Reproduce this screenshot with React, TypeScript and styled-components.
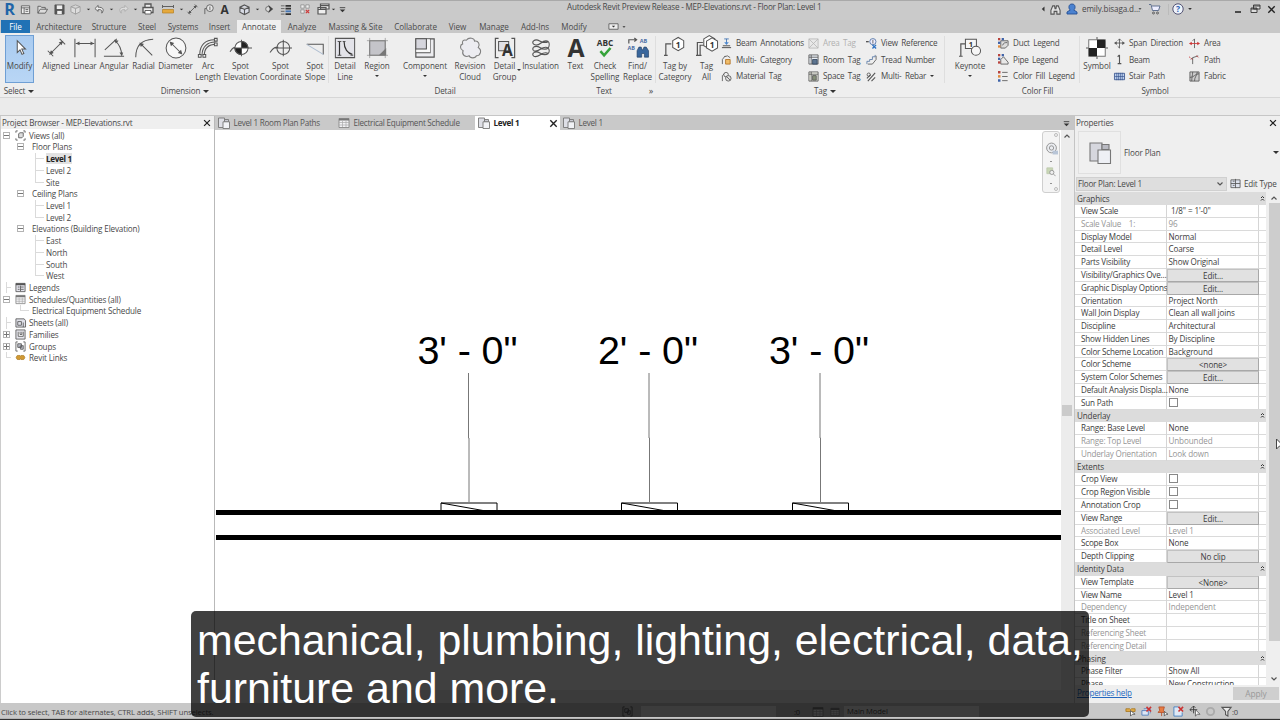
import React from "react";
import styled, { createGlobalStyle } from "styled-components";

const Global = createGlobalStyle`
  * { box-sizing: border-box; }
  html, body { margin: 0; padding: 0; }
  body {
    width: 1280px; height: 720px; overflow: hidden; background: #c9c9c9;
    font-family: "Open Sans", "Noto Sans", sans-serif;
    font-size: 8.1px; line-height: 12px; color: #484848; letter-spacing: -0.12px;
  }
`;

/* ---------- icons ---------- */
const K = "#555";
const tri = (x: number, y: number, s = 3, c = "#333") => <path d={`M${x - s} ${y - s / 2}h${2 * s}l${-s} ${s}z`} fill={c} stroke="none" />;
const hex = (x: number, y: number) => (
  <path d={`M${x - 6} ${y - 4}l6-3.5 6 3.5v7.5l-6 3.5-6-3.5z`} fill="#fff" stroke={K} />
);
const NumText = styled.text<{ $s?: number; $c?: string }>`
  font-family: "Open Sans", sans-serif; font-weight: 700; font-size: ${(p) => p.$s ?? 9}px;
  fill: ${(p) => p.$c ?? "#333"}; stroke: none; text-anchor: middle; letter-spacing: 0;
`;

const art: Record<string, React.ReactNode> = {
  modify: <path d="M9 4v13l3-3 2.2 5 2-1-2.2-4.8h4z" fill="#fff" stroke="#555" />,
  aligned: <g><path d="M6 18L19 5M3 15l6 6M16 2l6 6" /><path d="M4.5 19.5l2-5 3 3zM20 4l-2 5-3-3z" fill={K} stroke="none" /></g>,
  linear: <g><path d="M1 2v20M23 2v20M2 7h20" /><path d="M2 7l4-2v4zM22 7l-4-2v4z" fill={K} stroke="none" /></g>,
  angular: <g><path d="M1 21h22M2 14L15 2M13 4c5 4 7 9 7.5 16" /><path d="M12 3l5 1-3 3zM20.5 21l-2.500-4h4z" fill={K} stroke="none" /></g>,
  radial: <g><path d="M3 22C3 10 9 3 22 2.500M9 8l12 12" /><path d="M7 6l5 1.500-3.500 3.500z" fill={K} stroke="none" /></g>,
  diameter: <g><circle cx="12" cy="12" r="10.800" fill="#f7f7f7" /><path d="M6 6l12 12" /><path d="M5 5l5 1.500-3.500 3.500zM19 19l-5-1.500 3.500-3.500z" fill={K} stroke="none" /></g>,
  arc: <g><path d="M3 19C3 9 9 3 19 3M8 20c0-7 4-12 13-12M5.500 20C5.500 11 11 5.500 20 5.500" /><path d="M19 1.500h3v3h-3zM19 6.500h3v3h-3zM1.500 19h3v3h-3zM6.500 19h3v3h-3z" fill="#eee" /></g>,
  elevation: <g><path d="M0 16c4-6 6-5 9-5M12.500 3v18M3 12h21" /><circle cx="12.500" cy="12" r="7.200" fill="#fff" /><path d="M12.500 4.800a7.200 7.200 0 0 1 7.200 7.200h-7.200zM12.500 19.200a7.200 7.200 0 0 1-7.200-7.200h7.200z" fill="#222" /></g>,
  coordinate: <g><path d="M0 17c4-6 6-6 9-6M14.500 3v18M5 12h19" /><circle cx="14.500" cy="12" r="7" /></g>,
  slope: <g><path d="M3 8h18v11" /><path d="M3 8l18 11" stroke="#aebdd0" /></g>,
  detailLine: <g><path d="M1.500 1.500h21v21h-21z" fill="#e3e3e9" /><path d="M6 5v15M11 5c0 8 4 13 9 14" stroke="#333" strokeWidth="1.300" /><path d="M4 5h4M4 20h4M9.500 5h3M18 20h3" /></g>,
  region: <g><path d="M4 4h17v16H4z" fill="#c4c4c9" stroke="#777" /><path d="M1 4h23M1 20h23M4 1v22M21 1v22" stroke="#888" strokeWidth=".7" /><path d="M14 20l8-8v8z" fill="#777" stroke="none" /></g>,
  component: <g><path d="M2 2h20v20H2z" fill="#ededf0" strokeWidth="1.300" /><path d="M13.500 2v11H2M17.500 2v15H2" fill="none" strokeWidth="1.300" /><path d="M14 2.500h3.500v14H2.500V13H14z" fill="#f8f8f8" stroke="none" /><path d="M2 2h11.500v11H2z" fill="#d6d6dd" /></g>,
  cloud: <path d="M8 3.500c3-4 9-2 9 1 4-1 6.500 4 4 7 4.500 3 2.500 9-2 9-1 3-7 3-8 0-4 2-8.500-1-6.500-5.500C.5 13 1 8.500 4 7.500c-1-3 1-5 4-4z" fill="#ececf1" stroke="#808080" strokeWidth="1.200" />,
  group: <g><path d="M5 1.500H1.500v21H5M19 1.500h3.500v21H19" strokeWidth="1.300" /><path d="M5 5h11v10H5z" fill="#e1e1e6" /><NumText x="14.500" y="20.500" $s={17}>A</NumText></g>,
  insulation: <g><path d="M4 4c6-4 7 5 16 1M4 8c7 4 9-7 16-3M4 11c6-4 9 6 16 1M4 15c6 3 9-7 16-3M4 17c6-4 9 6 16 1M4 21c6 3 9-7 16-3" strokeWidth="1.300" /><path d="M4 4q-2 2 0 4M20 5q2 3 0 7M4 11q-2 2 0 4M20 12q2 3 0 6M4 17q-2 2 0 4" /></g>,
  bigA: <NumText x="12" y="22" $s={27}>A</NumText>,
  check: <g><NumText x="12" y="10" $s={9}>ABC</NumText><path d="M7 15.500l4 4.500 7-8" stroke="#35a33a" strokeWidth="2.800" /></g>,
  find: <g><NumText x="18" y="7" $s={6} $c="#4a6da5">AB</NumText><NumText x="4.500" y="14.500" $s={6} $c="#4a6da5">AB</NumText><path d="M2 7V3h8M8 1l2.500 2L8 5" strokeWidth="1.300" /><path d="M11 22v-7l2-4h2.500l1 3h1l1-3H21l2.500 4v7H19v-4h-3v4z" fill="#39669c" stroke="#223f63" strokeWidth=".7" /></g>,
  tagCat: <g><path d="M0 20h4M2 20V7.500h6" strokeWidth="1.300" />{hex(15.500, 8)}<NumText x="15.500" y="11.500">1</NumText></g>,
  tagAll: <g><path d="M0 20h6M1.500 20V6h6M4.500 20V9h5" strokeWidth="1.300" />{hex(14.500, 6)}{hex(17.500, 8.500)}<NumText x="17.500" y="12">1</NumText></g>,
  keynote: <g><path d="M0 21h4M2 21V7.500h5" strokeWidth="1.300" /><path d="M7 2.500h12v10H7z" fill="#f6f6f6" /><circle cx="18.500" cy="15" r="5" fill="#f6f6f6" /><NumText x="13" y="10.500" $s={8}>1</NumText></g>,
  symbol: <g><path d="M12 0v24M0 12h24" /><path d="M3 3h18v18H3z" fill="#fff" stroke="#777" /><path d="M12 3h8q1 0 1 1v8h-9zM12 21H4q-1 0-1-1v-8h9z" fill="#222" stroke="none" /></g>,
  planBig: <g strokeWidth="1.100" stroke="#777"><path d="M2 2h12v18H2z" fill="#d6d7de" /><path d="M14 3.500h7v5h-7z" fill="#b9bac2" /><path d="M10 9h12.500v13.500H10z" fill="#eef0f5" /></g>,

  beamAnn: <g><path d="M1 10.500h10M2 8.500h8" stroke="#333" /><path d="M3.500 1h5M6 1v5" stroke="#3a6fb0" /><path d="M3.500 4.500h5L6 7.500z" fill="#4a87d0" stroke="none" /></g>,
  multiCat: <g><path d="M1.500 11V6l3-4M4 3l3-1 3 2" /><path d="M5 6h5v5H5z" fill="#f0bd6a" stroke="#b06e1f" /></g>,
  material: <g><path d="M1.500 11V5l2-2" /><circle cx="5.500" cy="4" r="2.500" /><circle cx="8" cy="8" r="3" fill="#ddd" /><path d="M6 6l4 4" /></g>,
  areaTag: <g opacity=".35"><path d="M1 1h10v10H1zM1 1l10 10M11 1L1 11" fill="#ddd" /></g>,
  roomTag: <g><path d="M1 1h10v10H1z" fill="#e9eef5" /><path d="M1 3.500h10M3.500 1v10" /><path d="M5 6h5v5H5z" fill="#5d7590" stroke="#33475e" /></g>,
  spaceTag: <g><path d="M1 1h10v10H1z" fill="#eef0e6" /><path d="M1 3.500h10M3.500 1v10" /><path d="M5 5h4v5H5z" fill="#87927a" stroke={K} /></g>,
  viewRef: <g><path d="M0 4h3" strokeWidth="1.500" /><circle cx="7.500" cy="4" r="3.400" fill="#eef" stroke="#4b6ea0" /><path d="M7.500 2v4" /><path d="M7 7.500l4 4M11 7.500l-4 4" stroke="#2f73c4" strokeWidth="1.500" /></g>,
  tread: <g><path d="M1 11V8h3V6h3V3h3V1" stroke="#5577a5" /><path d="M2 11h5l4-5V2" /></g>,
  rebar: <g><path d="M2 11l8-9M1 8l4-4M6 11l4-4" strokeWidth="1.200" /><circle cx="3" cy="4" r="1.800" /></g>,
  duct: <g><path d="M3 3h8v5l-3 3H3z" fill="#ddd" /><path d="M0 0h2.500v2.500H0z" fill="#b8433d" stroke="none" /><path d="M4 0h2.500v2.500H4z" fill="#3d62a8" stroke="none" /><path d="M0 4h2.500v2.500H0z" fill="#3d62a8" stroke="none" /><path d="M0 8h2.500v2.500H0z" fill="#df8a3c" stroke="none" /><path d="M5 8c1-3 3-3 5-3" /></g>,
  pipe: <g><path d="M3 6l3-3 5 6v2H3z" fill="#e8e8e8" /><path d="M0 0h2.500v2.500H0z" fill="#b8433d" stroke="none" /><path d="M4 0h2.500v2.500H4z" fill="#3d62a8" stroke="none" /><path d="M0 4h2.500v2.500H0z" fill="#3d62a8" stroke="none" /><path d="M0 8h2.500v2.500H0z" fill="#b8433d" stroke="none" /></g>,
  fillLegend: <g><path d="M4.500 1.500h6M4.500 6h6M4.500 10.500h6" /><path d="M0 0h2.700v2.700H0z" fill="#b8433d" stroke="none" /><path d="M0 4.500h2.700v2.700H0z" fill="#df8a3c" stroke="none" /><path d="M0 9h2.700v2.700H0z" fill="#3d62a8" stroke="none" /></g>,
  span: <g><path d="M6 1v10M2 5.500h8M4 3L6 1l2 2M4 9l2 2" /><path d="M0 5.500l3-2v4zM12 5.500l-3-2v4z" fill={K} stroke="none" /></g>,
  beam: <path d="M6 1v9M4 3l2-2M4 10.500h4" strokeWidth="1.200" />,
  stair: <g><path d="M.5 2.500h11v7H.5z" fill="#bcd0ee" stroke="#34508a" /><path d="M3 2v8M5 2v8M7 2v8M9 2v8M1 6h10" stroke="#34508a" strokeWidth=".7" /></g>,
  area: <g><path d="M6 1v10M4 3L6 1" /><path d="M1 6h10" stroke="#c33" /><path d="M0 6l3-2v4zM12 6L9 4v4z" fill="#c33" stroke="none" /></g>,
  path: <g><path d="M4 11V4l6-2M2 6l2-2" /><path d="M0 3l4 3M8 2l3 2" stroke="#c33" strokeDasharray="2 1" /></g>,
  fabric: <g><path d="M1 1h10v10H1z" fill="#ccc" /><path d="M3 11c0-5 1-6 1-10M6 11c0-5 3-6 3-10M1 7c5 0 5-4 10-4" /></g>,

  revit: <NumText x="6" y="11.500" $s={15} $c="#1f65a8">R</NumText>,
  home: <g><path d="M1.500 2h9v8.500h-9z" fill="#eee" /><path d="M1.500 4.200h9M4.500 4v6.500" /><path d="M6 6h3M6 8h3" /></g>,
  open: <path d="M1 10V2.500h3l1 1.200h4v2M1 10l2.500-4.300h8L9 10z" fill="#dcdcdc" />,
  save: <g><path d="M1 1h10v10H1z" fill="#555" /><path d="M3 1.500h6v4H3z" fill="#eee" stroke="none" /><path d="M3.500 7.500h5V11h-5z" fill="#eee" stroke="none" /></g>,
  cubeGray: <path d="M6 1l5 2v5.500L6 11 1 8.500V3zM1 3l5 2 5-2M6 5v6" fill="#ddd" stroke="#999" />,
  undo: <path d="M4.500 1.500L1 5l3.500 3V6.200c3-.4 4.500.3 4 3.800 3-4 1.500-6.500-4-6.500z" fill="#eee" />,
  redo: <path d="M7.500 1.500L11 5 7.500 8V6.200c-3-.4-4.500.3-4 3.800-3-4-1.500-6.500 4-6.500z" fill="#ddd" stroke="#aaa" />,
  print: <g><path d="M3 4V1h6v3M1 4.500h10v5H1z" fill="#eee" strokeWidth="1.300" /><path d="M3 7.500h6v3.500H3z" fill="#fff" /></g>,
  measure: <g><path d="M.5 6.500h11V10H.5z" fill="#e5a93d" stroke="#b57f22" strokeWidth=".7" /><path d="M1 3.500h10M.5 2v3M11.500 2v3" /></g>,
  dim: <g><path d="M2 10l8-8M.5 8.500l3 3M8.500.5l3 3" /><path d="M1.500 10.500l1-3.500 2.500 2.500zM10.500 1.500l-1 3.500L7 2.500z" fill={K} stroke="none" /></g>,
  tagS: <g><path d="M2 11V5h3" /><circle cx="7.500" cy="4.500" r="3.700" fill="#e5e5e5" /><path d="M7.500 2.800v3.700" /></g>,
  aS: <NumText x="6" y="11" $s={13}>A</NumText>,
  cube: <path d="M6 1l5 2.500V9L6 11.500 1 9V3.500zM1 3.500L6 6l5-2.500M6 6v5" fill="#d9dce6" strokeWidth="1.200" />,
  section: <g><circle cx="5" cy="6" r="3" fill="#ddd" /><path d="M5 1l6 5-6 5 2-5z" fill="#444" stroke="none" /></g>,
  lines: <g><path d="M1 2h4M1 5h4M1 8h4M1 11h4" stroke="#555" /><path d="M6 2h6M6 5h6M6 11h6" strokeWidth="2" stroke="#333" /><path d="M6 8h6" strokeWidth="2" stroke="#4576b5" /></g>,
  closeWin: <g><path d="M1 1h4v4H1zM7 1h4v4H7zM1 7h4v4H1z" fill="#eee" stroke="#888" /><path d="M7 7l4 4M11 7l-4 4" stroke="#cc3a3a" strokeWidth="1.500" /></g>,
  switchWin: <path d="M3.500 1H12v5H3.500zM3.500 2.700H12M1 4.500h8V11H1zM1 6.500h8" fill="#eee" strokeWidth="1.200" />,
  binoc: <path d="M1 11V7l2-5h2l.5 3h1L7 2h2l2 5v4H7.500V8h-3v3z" fill="#e2e2e2" strokeWidth="1.200" />,
  user: <path d="M6 1c4 0 3.500 5 1.800 6L11 9v2H1V9l3.200-2C2.500 6 2 1 6 1z" fill="#4b82d0" stroke="#254f94" />,
  cart: <g><path d="M0 1.500h2l1.500 6h6l1.500-4.500H3" fill="#eef" stroke="#568" /><circle cx="4.500" cy="10" r="1" /><circle cx="8.500" cy="10" r="1" /></g>,
  help: <g><circle cx="6" cy="6" r="5.200" fill="#eef3fb" stroke="#446" /><NumText x="6" y="9" $s={8.5} $c="#2a5db0">?</NumText></g>,
  min: <path d="M3 9h6" strokeWidth="1.700" stroke="#333" />,
  restore: <path d="M4.500 2H11v4H4.500zM4.500 3H11M2 5h6v4.500H2zM2 6h6" stroke="#333" fill="#ddd" />,
  close: <path d="M2.500 2.500l7 7M9.500 2.500l-7 7" strokeWidth="1.500" stroke="#222" />,
  left: <path d="M7.500 3.500v5L4.800 6z" fill="#333" stroke="none" />,
  dot: tri(6, 6, 1.9),
  dd: <g><path d="M3 4h6" stroke="#333" />{tri(6, 7.500, 3)}</g>,
  pill: <g><path d="M1 3h10v6H1z" fill="#eee" strokeLinejoin="round" />{tri(6, 6.200, 1.800)}</g>,

  views: <g><path d="M1 3V1h2M9 1h2v2M11 9v2H9M3 11H1V9" /><path d="M4 4l1.500-1H9v4L7.500 8.500H4z" fill="#ddd" /></g>,
  legend: <g><path d="M1 1.500h10v9H1z" fill="#e4e4ec" /><path d="M1 2.500h10" strokeWidth="2" /><path d="M3 5.500h2M3 8h2M6.500 5.500h3M6.500 8h3M6 4v6" /></g>,
  table: <g><path d="M1 1.500h10v9H1z" fill="#f2f2f4" stroke="#888" /><path d="M1 2.500h10" strokeWidth="2" stroke="#777" /><path d="M1 5.500h10M1 8h10M4.500 4v6M8 4v6" stroke="#aaa" strokeWidth=".7" /></g>,
  sheet: <path d="M1 2h9l1.500 2v7H1zM3 5h4v4H3zM9 6v5" fill="#dfe0e8" />,
  family: <path d="M1 1h10v10H1zM3.500 3v5H9V3M5.500 3v3h2V3" fill="#e5e5ec" />,
  groups: <g><path d="M3 1H1v10h2M9 1h2v10H9" /><path d="M3 3h4v4H3zM5.500 5.500L9 5v4H6z" fill="#b9bcc8" /></g>,
  link: <path d="M2.500 3.800h3l.5 1 .5-1h3Q12 6 9.500 8.200h-3l-.5-1-.5 1h-3Q0 6 2.500 3.800z" fill="#d19a34" stroke="#a87720" strokeWidth=".7" />,
  plan: <g stroke="#777"><path d="M.5 1h6v9.500h-6z" fill="#dedfe6" /><path d="M6.500 2.500h4V5h-4z" fill="#c8c9d2" /><path d="M5 4.800h6.500v6.700H5z" fill="#f1f2f6" /></g>,
  editType: <path d="M1 2h10v8.500H1zM6 1v10M1 6h10M3 3.500h2M3 8h2" fill="#dde2ee" />,
  wheel: <g opacity=".6"><circle cx="6" cy="5.500" r="4.500" fill="#e4e8ef" /><circle cx="6" cy="5.500" r="2" /><path d="M7 8h5v3.500H7z" fill="#91a6c4" stroke="none" /></g>,
  zoom: <g opacity=".7"><path d="M1 1h7v7H1z" fill="#b7cc9c" stroke="#a3b58c" /><circle cx="7" cy="6.500" r="2.500" fill="#eee" /><path d="M9 8.500l2.500 2.500" /></g>,
  stA: <g><path d="M1 3h4l1 1 1-1h4v3H1z" fill="#e0aa47" stroke="#a77822" /><path d="M6 5v6l2-2h3z" fill="#fff" /></g>,
  stB: <g><path d="M1 5h7v5H1zM3 3h7v5" stroke="#4a78b8" fill="#dde6f4" /><path d="M6 1l5 5M11 1L6 6" stroke="#c33" strokeWidth="1.700" /></g>,
  stC: <g><path d="M2 1h6l-1 4 2 2H1l2-2zM5 7v4" fill="#e77c42" stroke="#b54d27" /><path d="M8 6v5l2-2h2z" fill="#fff" /></g>,
  stD: <g><path d="M6 1H1v10h9V7" stroke="#3c7bc0" fill="#dfe8f4" /><path d="M6 1l5 5M11 1L6 6" stroke="#c33" strokeWidth="1.700" /></g>,
  stE: <g><path d="M5 0v8M1 4h8M3 2l2-2 2 2M3 2L1 4l2 2" stroke="#333" /><path d="M7 4v7l2-2h3z" fill="#fff" /></g>,
  ring: <circle cx="6" cy="6" r="4" stroke="#aaa" strokeWidth="2" />,
  filter: <path d="M1 1.500h10L7.500 6v5L5 9.500V6z" fill="#ececec" strokeWidth="1.200" />,
};

const Svg = styled.svg`display: block; flex: none; overflow: visible;`;
const Icon = ({ n, s = 12 }: { n: string; s?: number }) => {
  const big = s >= 20;
  return (
    <Svg width={s} height={s} viewBox={big ? "0 0 24 24" : "0 0 12 12"} fill="none" stroke={K} strokeWidth={big ? 1.1 : 0.9}>
      {art[n]}
    </Svg>
  );
};

/* ---------- title bar and tabs ---------- */
const Window = styled.div`
  position: relative; width: 1280px; height: 720px; display: flex; flex-direction: column; overflow: hidden;
  background: #ebebeb; border-top: 1px solid #a9a9a9; white-space: nowrap;
`;
const TitleBar = styled.header`display: grid; grid-template-columns: 1fr 300px 1fr; height: 19px; background: #cacaca; flex: none;`;
const Quick = styled.div`display: flex; align-items: center; height: 16px; padding-left: 1px;`;
const Cell = styled.span<{ $w: number }>`
  width: ${(p) => p.$w}px; flex: none; display: flex; align-items: center; justify-content: center;
`;
const Title = styled.div`height: 13px; padding-left: 77px; width: 490px; line-height: 12px; letter-spacing: -0.22px;`;
const Account = styled.div`display: flex; align-items: center; justify-content: flex-end; height: 16px;`;
const UserName = styled.span`width: 56px;`;
const Rule = styled.i`width: 1px; height: 11px; background: #bbb;`;

const MenuRow = styled.nav`display: flex; height: 13px; background: #c8c8c8; padding-left: 1px; flex: none;`;
const MenuTab = styled.span<{ $w: number; $kind?: "file" | "on" }>`
  width: ${(p) => p.$w}px; text-align: center; line-height: 13px; display: flex; justify-content: center; align-items: center;
  background: ${(p) => (p.$kind === "file" ? "#2072b5" : p.$kind === "on" ? "#efefef" : "transparent")};
  color: ${(p) => (p.$kind === "file" ? "#fff" : "#4a4a4a")};
  letter-spacing: -0.08px;
`;

/* ---------- ribbon ---------- */
const Ribbon = styled.section`
  display: flex; height: 65px; background: #eee; border-bottom: 1px solid #d6d6d6; flex: none;
`;
const Group = styled.div<{ $w: number; $line?: boolean }>`
  position: relative; width: ${(p) => p.$w}px; flex: none; display: flex; flex-direction: column;
  &::after {
    content: ""; position: absolute; right: 0; top: 3px; width: 1px; height: 47px;
    background: ${(p) => (p.$line ? "#dedede" : "transparent")};
  }
`;
const Tools = styled.div<{ $l?: number }>`display: flex; height: 52px; padding: 2px 0 0 ${(p) => p.$l ?? 0}px;`;
const GroupName = styled.div<{ $l?: number; $r?: number }>`
  display: flex; justify-content: center; align-items: center; gap: 3px; height: 12px; line-height: 12px;
  padding-left: ${(p) => p.$l ?? 0}px; padding-right: ${(p) => p.$r ?? 0}px;
`;
const Big = styled.div<{ $w: number; $on?: boolean }>`
  width: ${(p) => p.$w}px; height: 48px; flex: none; display: flex; flex-direction: column; align-items: center;
  background: ${(p) => (p.$on ? "linear-gradient(#a9cbf0, #b9d6f5)" : "transparent")};
  outline: ${(p) => (p.$on ? "1px solid #6f9fd4" : "none")};
  outline-offset: -1px; line-height: 10.6px; text-align: center; letter-spacing: -0.07px;
  svg { margin: 2px 0 2px; }
`;
const Caret = styled.i<{ $s?: number }>`
  border: ${(p) => p.$s ?? 3}px solid transparent; border-top-color: #333; border-bottom: 0; flex: none;
  align-self: center;
`;
const Under = styled(Caret)`margin-top: 3px; border-width: 2px; border-bottom: 0;`;
const Drop = styled(Caret)`align-self: flex-start; margin: 34px 4px 0 -8px;`;
const Small = styled.div<{ $w: number }>`width: ${(p) => p.$w}px; flex: none; display: flex; flex-direction: column;`;
const SmallRow = styled.div<{ $off?: boolean }>`
  display: flex; align-items: center; gap: 4px; height: 16.5px; word-spacing: 1.6px; letter-spacing: -0.22px;
  color: ${(p) => (p.$off ? "#b0b0b0" : "#484848")};
`;
const Launcher = styled.span`position: absolute; right: 3px; bottom: 0; font-size: 9px;`;
const OptionsBar = styled.div`height: 18px; background: #ebebeb; border-bottom: 1px solid #c6c6c6; flex: none;`;

const BigTool = ({ i, w, t, u, on }: { i: string; w: number; t: string[]; u?: boolean; on?: boolean }) => (
  <Big $w={w} $on={on}>
    <Icon n={i} s={22} />
    {t.map((x) => <span key={x}>{x}</span>)}
    {u && <Under />}
  </Big>
);
const SmallTools = ({ w, rows }: { w: number; rows: [string, string][] }) => (
  <Small $w={w}>
    {rows.map(([i, t]) => (
      <SmallRow key={t} $off={t === "Area Tag"}>
        <Icon n={i} s={11} />{t}{t === "Multi- Rebar" && <Caret $s={2} />}
      </SmallRow>
    ))}
  </Small>
);

/* ---------- body ---------- */
const Body = styled.main`display: flex; flex: 1; min-height: 0;`;
const Browser = styled.aside`width: 215px; flex: none; background: #fff; border-right: 1px solid #b9b9b9; border-left: 1px solid #ccc;`;
const PaneTitle = styled.div`
  height: 13px; background: #efefef; display: flex; align-items: center; justify-content: space-between; padding: 0 2px 0 1px;
  letter-spacing: -0.17px; margin-bottom: 0.3px;
`;
const TreeRow = styled.div<{ $d: number }>`
  height: 11.72px; display: flex; align-items: center; padding-left: ${(p) => (p.$d === 3 ? 34 : p.$d === 2 ? 16 : 2)}px;
`;
const Elbow = styled.i<{ $end?: boolean; $w: number }>`
  width: ${(p) => p.$w}px; height: 11.72px; flex: none;
  background:
    linear-gradient(#dadada, #dadada) 0 0 / 1px ${(p) => (p.$end ? "50%" : "100%")} no-repeat,
    linear-gradient(#dadada, #dadada) 0 50% / 100% 1px no-repeat;
`;
const Toggle = styled.i<{ $plus?: boolean }>`
  width: 7px; height: 7px; flex: none; border: 1px solid #b3b3b3;
  background:
    linear-gradient(#777, #777) center / 5px 1px no-repeat,
    linear-gradient(#777, #777) center / 1px ${(p) => (p.$plus ? 5 : 0)}px no-repeat, #fff;
`;
const TreeName = styled.span<{ $on?: boolean; $ml: number }>`
  margin-left: ${(p) => p.$ml}px; line-height: 11px; letter-spacing: -0.15px;
  ${(p) => p.$on && "font-weight: 700; background: #e2e2e2; color: #222; letter-spacing: -0.3px;"}
`;

const Center = styled.section`width: 859px; flex: none; display: flex; flex-direction: column; background: #ececec;`;
const DocTabs = styled.div`display: flex; height: 14px; background: #c6c6c6; flex: none;`;
const DocTab = styled.div<{ $w: number; $on?: boolean }>`
  width: ${(p) => p.$w}px; display: flex; align-items: center; padding: 0 1px 0 3px; gap: 3.5px;
  background: ${(p) => (p.$on ? "#fff" : "#c9c9c9")}; color: ${(p) => (p.$on ? "#222" : "#555")};
  font-weight: ${(p) => (p.$on ? 700 : 400)};
  letter-spacing: ${(p) => (p.$on ? -0.3 : -0.25)}px;
  svg:last-child:not(:first-child) { margin-left: auto; }
`;
const TabMenu = styled.span`margin-left: auto; width: 15px; display: flex; align-items: center; justify-content: center;`;
const View = styled.div`flex: 1; display: flex; min-height: 0;`;
const Drawing = styled.div`width: 846px; background: #fff; position: relative; margin-bottom: 13px;`;
const Dim = styled.text`font-family: "Liberation Sans", Arial, sans-serif; font-size: 39.5px; letter-spacing: -0.1px; fill: #000;`;
const NavBar = styled.div`
  position: absolute; right: 1px; top: 1px; width: 18px; height: 62px; border: 1px solid #cfcfcf; border-radius: 3px;
  background: #f4f4f4; display: flex; flex-direction: column; align-items: center; justify-content: space-between; padding: 10px 0 8px;
`;
const Knob = styled.i<{ $b?: boolean }>`
  position: absolute; right: 1px; ${(p) => (p.$b ? "bottom: 1px" : "top: 1px")}; width: 4px; height: 4px; border-radius: 50%; border: 1px solid #bbb;
`;
const VScroll = styled.div`width: 11px; display: flex; flex-direction: column; align-items: center; padding-top: 4px;`;
const Thumb = styled.i`width: 10px; height: 11px; background: #cbcbcb; margin-top: 267px;`;

/* ---------- properties ---------- */
const Props = styled.aside`width: 206px; flex: none; background: #efefef; border-left: 1px solid #c4c4c4; display: flex; flex-direction: column;`;
const TypeRow = styled.div`height: 47px; display: flex; align-items: center; padding: 0 1px 0 3px; gap: 3px;`;
const Preview = styled.div`width: 43px; height: 43px; border: 1px solid #e0e0e0; background: #f0f0f0; display: grid; place-items: center;`;
const Grow = styled.span`flex: 1;`;
const Selector = styled.div`height: 15px; display: flex; gap: 3px; align-items: center; padding-left: 1px; margin-bottom: 1px; letter-spacing: -0.22px;`;
const Combo = styled.div`width: 151px; height: 14px; background: #dedede; border: 1px solid #d0d0d0; display: flex; align-items: center; justify-content: space-between; padding: 0 3px 0 1px;`;
const Grid = styled.div`display: flex; height: 493px; overflow: hidden; flex: none;`;
const Table = styled.div`width: 191px; background: #fff; overflow: hidden;`;
const Head = styled.div`
  height: 12.79px; background: #dcdcdc; display: flex; align-items: center; justify-content: space-between; padding: 0 1px 0 2px; color: #3c3c3c;
`;
const PRow = styled.div<{ $off?: boolean }>`
  height: 12.79px; display: grid; grid-template-columns: 92px 92px 7px; border-bottom: 1px solid #dadada;
  color: ${(p) => (p.$off ? "#969696" : "#3c3c3c")}; line-height: 12.6px;
`;
const PName = styled.span`padding-left: 6px; border-right: 1px solid #d5d5d5; white-space: pre; letter-spacing: -0.2px;`;
const PValue = styled.span<{ $in?: boolean }>`padding-left: ${(p) => (p.$in ? 4 : 1.5)}px; border-right: 1px solid #d5d5d5;`;
const PButton = styled.span`
  background: #e1e1e1; border: 1px solid #c2c2c2; border-right-color: #a8a8a8; border-bottom-color: #a8a8a8; text-align: center; line-height: 11px;
`;
const Box = styled.i`display: block; width: 9px; height: 9px; border: 1px solid #888; background: #fff; margin-top: 1px;`;
const PScroll = styled.div`flex: 1; display: flex; flex-direction: column; align-items: center; padding: 4px 0 4px 2px;`;
const PThumb = styled.i`width: 11px; height: 438px; background: #cdcdcd; margin: 3px 0 auto;`;
const Foot = styled.div`flex: 1; display: flex; justify-content: space-between; align-items: center; padding: 0 1px 2px 2px;`;
const Help = styled.span`color: #2468c0; text-decoration: underline; letter-spacing: -0.2px;`;
const Apply = styled.span`width: 46px; height: 13px; line-height: 13px; text-align: center; background: #cfcfcf; color: #999; font-size: 8.4px;`;

const Status = styled.footer`
  height: 15px; flex: none; background: #c8c8c8; display: flex; align-items: center; padding: 2px 0 0 1px; font-size: 7.6px;
`;
const StatusText = styled.span`width: 621px; letter-spacing: -0.12px; font-size: 7.7px;`;
const Field = styled.span<{ $w: number }>`width: ${(p) => p.$w}px; height: 11px; background: #eee; line-height: 11px; padding-left: 3px; margin-right: 18px;`;
const StatusIcons = styled.div`display: flex; gap: 5px; align-items: center; margin-left: auto; padding-right: 42px;`;
const Count = styled.span`margin-left: -5px;`;
const Edge = styled.div`height: 2px; flex: none; background: #303030; border-top: 1px solid #b4b4b4;`;

const Caption = styled.div`
  position: absolute; left: 191px; top: 610px; width: 898px; height: 106px; border-radius: 5px; background: rgba(0, 0, 0, 0.75);
  color: #fff; font: 42.85px/48px "Liberation Sans", Arial, sans-serif; letter-spacing: 0; padding: 5px 0 0 6px;
`;
const Pointer = styled.svg`position: absolute; left: 1275px; top: 437px;`;

type Node = { d: 1 | 2 | 3; t: string; i?: string; g?: "-" | "+"; end?: boolean; on?: boolean };
const tree: Node[] = [
  { d: 1, t: "Views (all)", i: "views", g: "-" },
  { d: 2, t: "Floor Plans", g: "-" },
  { d: 3, t: "Level 1", on: true }, { d: 3, t: "Level 2" }, { d: 3, t: "Site", end: true },
  { d: 2, t: "Ceiling Plans", g: "-" },
  { d: 3, t: "Level 1" }, { d: 3, t: "Level 2", end: true },
  { d: 2, t: "Elevations (Building Elevation)", g: "-" },
  { d: 3, t: "East" }, { d: 3, t: "North" }, { d: 3, t: "South" }, { d: 3, t: "West", end: true },
  { d: 1, t: "Legends", i: "legend" },
  { d: 1, t: "Schedules/Quantities (all)", i: "table", g: "-" },
  { d: 2, t: "Electrical Equipment Schedule", end: true },
  { d: 1, t: "Sheets (all)", i: "sheet" },
  { d: 1, t: "Families", i: "family", g: "+" },
  { d: 1, t: "Groups", i: "groups", g: "+" },
  { d: 1, t: "Revit Links", i: "link", end: true },
];

const TreeItem = ({ n }: { n: Node }) => (
  <TreeRow $d={n.d}>
    {n.d === 1 && (n.g ? <><Toggle $plus={n.g === "+"} /><Cell $w={1} /></> : <><Cell $w={3} /><Elbow $w={5} $end={n.end} /></>)}
    {n.d === 2 && (n.g ? <><Toggle /><Cell $w={1} /></> : <><Cell $w={3} /><Elbow $w={9} $end /></>)}
    {n.d === 3 && <Elbow $w={9} $end={n.end} />}
    {n.i && <Cell $w={18}><Icon n={n.i} s={11} /></Cell>}
    <TreeName $on={n.on} $ml={n.d === 2 ? (n.g ? 7 : 3) : n.d === 3 ? 2 : 0}>{n.t}</TreeName>
  </TreeRow>
);

type Prop = [string, string?, ("b" | "o" | "c" | "h" | "in")?];
const props: Prop[] = [
  ["Graphics", "", "h"], ["View Scale", "1/8\" = 1'-0\"", "in"], ["Scale Value    1:", "96", "o"], ["Display Model", "Normal"],
  ["Detail Level", "Coarse"], ["Parts Visibility", "Show Original"], ["Visibility/Graphics Ove...", "Edit...", "b"],
  ["Graphic Display Options", "Edit...", "b"], ["Orientation", "Project North"], ["Wall Join Display", "Clean all wall joins"],
  ["Discipline", "Architectural"], ["Show Hidden Lines", "By Discipline"], ["Color Scheme Location", "Background"],
  ["Color Scheme", "<none>", "b"], ["System Color Schemes", "Edit...", "b"], ["Default Analysis Displa...", "None"], ["Sun Path", "", "c"],
  ["Underlay", "", "h"], ["Range: Base Level", "None"], ["Range: Top Level", "Unbounded", "o"], ["Underlay Orientation", "Look down", "o"],
  ["Extents", "", "h"], ["Crop View", "", "c"], ["Crop Region Visible", "", "c"], ["Annotation Crop", "", "c"], ["View Range", "Edit...", "b"],
  ["Associated Level", "Level 1", "o"], ["Scope Box", "None"], ["Depth Clipping", "No clip", "b"],
  ["Identity Data", "", "h"], ["View Template", "<None>", "b"], ["View Name", "Level 1"], ["Dependency", "Independent", "o"],
  ["Title on Sheet", ""], ["Referencing Sheet", "", "o"], ["Referencing Detail", "", "o"],
  ["Phasing", "", "h"], ["Phase Filter", "Show All"], ["Phase", "New Construction"],
];
const Chevrons = () => (
  <Svg width="5" height="8" fill="none" stroke="#333" strokeWidth="1"><path d="M1 3l1.500-1.500L4 3M1 5.500L2.500 4 4 5.500" /></Svg>
);
const Angle = ({ down }: { down?: boolean }) => (
  <Svg width="6" height="4" fill="none" stroke="#555" strokeWidth="1.200"><path d={down ? "M.5.5l2.500 2.500L5.500.5" : "M.5 3.500L3 1l2.500 2.500"} /></Svg>
);
const PropRow = ({ p: [name, val, k] }: { p: Prop }) =>
  k === "h" ? (
    <Head><span>{name}</span><Chevrons /></Head>
  ) : (
    <PRow $off={k === "o"}>
      <PName>{name}</PName>
      {k === "b" ? <PButton>{val}</PButton> : <PValue $in={k === "in"}>{k === "c" ? <Box /> : val}</PValue>}
    </PRow>
  );

const quick: [string, number, number?][] = [
  ["revit", 16, 13], ["home", 16], ["open", 19], ["save", 15], ["cubeGray", 17], ["dot", 8], ["undo", 15], ["dot", 8], ["redo", 16], ["dot", 8],
  ["print", 17, 12], ["measure", 23, 12], ["dot", 4], ["dim", 19], ["tagS", 12], ["aS", 20], ["cube", 21], ["dot", 4], ["section", 19, 10], ["lines", 14, 11],
  ["closeWin", 25, 10], ["switchWin", 11, 12], ["dot", 11], ["dd", 7, 11],
];
const menus: [string, number][] = [
  ["Architecture", 58], ["Structure", 42], ["Steel", 34], ["Systems", 38], ["Insert", 35], ["Annotate", 44], ["Analyze", 42],
  ["Massing & Site", 65], ["Collaborate", 55], ["View", 29], ["Manage", 44], ["Add-Ins", 38], ["Modify", 40],
];
const dims: [number, string][] = [[253.5, "3' - 0\""], [434, "2' - 0\""], [605, "3' - 0\""]];

export default function App() {
  return (
    <Window>
      <Global />
      <TitleBar>
        <Quick>{quick.map(([n, w, s], i) => <Cell key={i} $w={w}><Icon n={n} s={s ?? 11} /></Cell>)}</Quick>
        <Title>Autodesk Revit Preview Release - MEP-Elevations.rvt - Floor Plan: Level 1</Title>
        <Account>
          <Cell $w={12}><Icon n="left" /></Cell><Cell $w={12}><Icon n="binoc" s={11} /></Cell><Cell $w={21}><Icon n="user" /></Cell>
          <UserName>emily.bisaga.d...</UserName>
          <Cell $w={4}><Icon n="dot" s={10} /></Cell><Cell $w={26}><Icon n="cart" /></Cell><Rule />
          <Cell $w={17}><Icon n="help" /></Cell><Cell $w={8}><Icon n="dot" /></Cell>
          <Cell $w={36} /><Cell $w={16}><Icon n="min" /></Cell><Cell $w={17}><Icon n="restore" /></Cell><Cell $w={17}><Icon n="close" s={11} /></Cell>
        </Account>
      </TitleBar>
      <MenuRow>
        <MenuTab $w={29} $kind="file">File</MenuTab>
        {menus.map(([t, w]) => <MenuTab key={t} $w={w} $kind={t === "Annotate" ? "on" : undefined}>{t}</MenuTab>)}
        <MenuTab $w={48}><Icon n="pill" s={11} /><Icon n="dot" s={10} /></MenuTab>
      </MenuRow>

      <Ribbon>
        <Group $w={41}>
          <Tools $l={5}><BigTool i="modify" w={29} t={["Modify"]} on /></Tools>
          <GroupName $r={3}>Select <Caret /></GroupName>
        </Group>
        <Group $w={288} $line>
          <Tools>
            <BigTool i="aligned" w={30} t={["Aligned"]} /><BigTool i="linear" w={28} t={["Linear"]} />
            <BigTool i="angular" w={30} t={["Angular"]} /><BigTool i="radial" w={29} t={["Radial"]} />
            <BigTool i="diameter" w={35} t={["Diameter"]} /><BigTool i="arc" w={30} t={["Arc", "Length"]} />
            <BigTool i="elevation" w={35} t={["Spot", "Elevation"]} /><BigTool i="coordinate" w={45} t={["Spot", "Coordinate"]} />
            <BigTool i="slope" w={24} t={["Spot", "Slope"]} />
          </Tools>
          <GroupName>Dimension <Caret /></GroupName>
        </Group>
        <Group $w={232}>
          <Tools $l={1}>
            <BigTool i="detailLine" w={30} t={["Detail", "Line"]} /><BigTool i="region" w={34} t={["Region"]} u />
            <BigTool i="component" w={62} t={["Component"]} u /><BigTool i="cloud" w={28} t={["Revision", "Cloud"]} />
            <BigTool i="group" w={41} t={["Detail", "Group"]} /><Drop $s={2} />
            <BigTool i="insulation" w={31} t={["Insulation"]} />
          </Tools>
          <GroupName>Detail</GroupName>
        </Group>
        <Group $w={95} $line>
          <Tools>
            <BigTool i="bigA" w={29} t={["Text"]} /><BigTool i="check" w={30} t={["Check", "Spelling"]} />
            <BigTool i="find" w={35} t={["Find/", "Replace"]} />
          </Tools>
          <GroupName $r={9}>Text</GroupName>
          <Launcher>»</Launcher>
        </Group>
        <Group $w={289} $line>
          <Tools>
            <BigTool i="tagCat" w={38} t={["Tag by", "Category"]} /><BigTool i="tagAll" w={25} t={["Tag", "All"]} /><Cell $w={2} />
            <SmallTools w={87} rows={[["beamAnn", "Beam Annotations"], ["multiCat", "Multi- Category"], ["material", "Material Tag"]]} />
            <SmallTools w={58} rows={[["areaTag", "Area Tag"], ["roomTag", "Room Tag"], ["spaceTag", "Space Tag"]]} />
            <SmallTools w={77} rows={[["viewRef", "View Reference"], ["tread", "Tread Number"], ["rebar", "Multi- Rebar"]]} />
          </Tools>
          <GroupName $l={49}>Tag <Caret /></GroupName>
        </Group>
        <Group $w={50}>
          <Tools><BigTool i="keynote" w={50} t={["Keynote"]} u /></Tools>
        </Group>
        <Group $w={85} $line>
          <Tools $l={3}>
            <SmallTools w={80} rows={[["duct", "Duct Legend"], ["pipe", "Pipe Legend"], ["fillLegend", "Color Fill Legend"]]} />
          </Tools>
          <GroupName>Color Fill</GroupName>
        </Group>
        <Group $w={150}>
          <Tools>
            <BigTool i="symbol" w={34} t={["Symbol"]} />
            <SmallTools w={75} rows={[["span", "Span Direction"], ["beam", "Beam"], ["stair", "Stair Path"]]} />
            <SmallTools w={40} rows={[["area", "Area"], ["path", "Path"], ["fabric", "Fabric"]]} />
          </Tools>
          <GroupName>Symbol</GroupName>
        </Group>
      </Ribbon>
      <OptionsBar />

      <Body>
        <Browser>
          <PaneTitle>Project Browser - MEP-Elevations.rvt <Icon n="close" s={10} /></PaneTitle>
          {tree.map((n, i) => <TreeItem key={i} n={n} />)}
        </Browser>

        <Center>
          <DocTabs>
            <DocTab $w={120}><Icon n="plan" />Level 1 Room Plan Paths</DocTab>
            <DocTab $w={140}><Icon n="table" />Electrical Equipment Schedule</DocTab>
            <DocTab $w={85} $on><Icon n="plan" />Level 1<Icon n="close" s={11} /></DocTab>
            <DocTab $w={90}><Icon n="plan" />Level 1</DocTab>
            <TabMenu><Icon n="dd" s={11} /></TabMenu>
          </DocTabs>
          <View>
            <Drawing>
              <svg width="846" height="480" fill="none" stroke="#000">
                {dims.map(([x, t]) => (
                  <g key={x}>
                    <Dim x={x - 51} y="234" stroke="none">{t}</Dim>
                    <path d={`M${x} 243v65h.5v64`} stroke="#777" />
                    <path d={`M${x - 27.500} 381V373h56v8M${x - 27.500} 373l42 7.500`} />
                  </g>
                ))}
                <path d="M1 382.500h845M1 407.500h845" strokeWidth="5" />
              </svg>
              <NavBar><Knob /><Icon n="wheel" s={13} /><Caret $s={1} /><Icon n="zoom" s={10} /><Caret $s={1} /><Knob $b /></NavBar>
            </Drawing>
            <VScroll><Angle /><Thumb /></VScroll>
          </View>
        </Center>

        <Props>
          <PaneTitle>Properties <Icon n="close" s={10} /></PaneTitle>
          <TypeRow><Preview><Icon n="planBig" s={24} /></Preview>Floor Plan<Grow /><Caret /></TypeRow>
          <Selector><Combo>Floor Plan: Level 1 <Angle down /></Combo><Icon n="editType" s={11} />Edit Type</Selector>
          <Grid>
            <Table>{props.map((p, i) => <PropRow key={i} p={p} />)}</Table>
            <PScroll><Angle /><PThumb /><Angle down /></PScroll>
          </Grid>
          <Foot><Help>Properties help</Help><Apply>Apply</Apply></Foot>
        </Props>
      </Body>

      <Status>
        <StatusText>Click to select, TAB for alternates, CTRL adds, SHIFT unselects.</StatusText>
        <Icon n="groups" s={11} /><Cell $w={8} /><Field $w={135} />
        <span>:0</span><Cell $w={12} /><Icon n="table" /><Cell $w={6} /><Icon n="table" s={10} /><Cell $w={4} /><Field $w={135}>Main Model</Field>
        <StatusIcons>
          {["stA", "stB", "stC", "stD", "stE", "ring"].map((n) => <Icon key={n} n={n} s={11} />)}
          <Icon n="filter" s={11} /><Count>:0</Count>
        </StatusIcons>
      </Status>
      <Edge />
      <Caption>mechanical, plumbing, lighting, electrical, data,<br />furniture and more.</Caption>
      <Pointer width="8" height="14" fill="#fff" stroke="#444"><path d="M1.500 1v10l3-3h4z" /></Pointer>
    </Window>
  );
}
